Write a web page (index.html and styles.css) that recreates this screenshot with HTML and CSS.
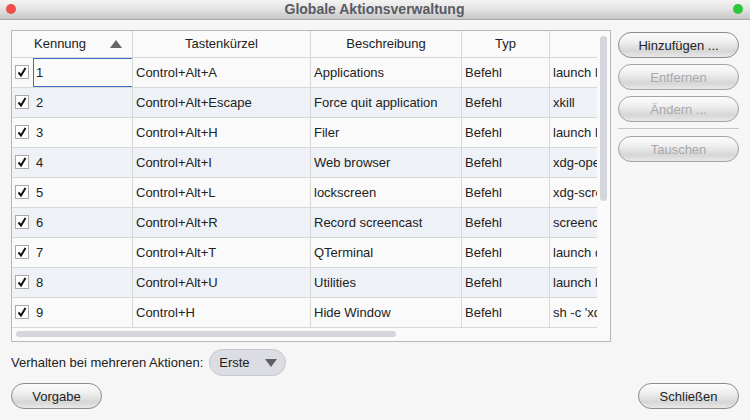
FILE: index.html
```html
<!DOCTYPE html>
<html lang="de">
<head>
<meta charset="utf-8">
<title>Globale Aktionsverwaltung</title>
<link rel="stylesheet" href="styles.css">
</head>
<body>
<div class="window">
  <div class="titlebar">
    <span class="dot red"></span>
    <span class="title">Globale Aktionsverwaltung</span>
    <span class="dot green"></span>
  </div>
  <div class="main">
    <div class="frame">
      <div class="upper">
        <div class="viewport">
          <div class="row head">
            <div class="cell c1 h1"><span>Kennung</span><span class="sort"></span></div>
            <div class="cell c2 hc">Tastenkürzel</div>
            <div class="cell c3 hc">Beschreibung</div>
            <div class="cell c4 hc">Typ</div>
            <div class="cell c5"></div>
          </div>
          <div class="row odd">
            <div class="cell c1"><span class="cb"><svg viewBox="0 0 12 12"><path d="M2.5 6.5 L5 9.5 L9.5 2" /></svg></span><span class="id focus">1</span></div>
            <div class="cell c2">Control+Alt+A</div>
            <div class="cell c3">Applications</div>
            <div class="cell c4">Befehl</div>
            <div class="cell c5">launch lxqt-panel</div>
          </div>
          <div class="row even">
            <div class="cell c1"><span class="cb"><svg viewBox="0 0 12 12"><path d="M2.5 6.5 L5 9.5 L9.5 2" /></svg></span><span class="id">2</span></div>
            <div class="cell c2">Control+Alt+Escape</div>
            <div class="cell c3">Force quit application</div>
            <div class="cell c4">Befehl</div>
            <div class="cell c5">xkill</div>
          </div>
          <div class="row odd">
            <div class="cell c1"><span class="cb"><svg viewBox="0 0 12 12"><path d="M2.5 6.5 L5 9.5 L9.5 2" /></svg></span><span class="id">3</span></div>
            <div class="cell c2">Control+Alt+H</div>
            <div class="cell c3">Filer</div>
            <div class="cell c4">Befehl</div>
            <div class="cell c5">launch lxqt-filer</div>
          </div>
          <div class="row even">
            <div class="cell c1"><span class="cb"><svg viewBox="0 0 12 12"><path d="M2.5 6.5 L5 9.5 L9.5 2" /></svg></span><span class="id">4</span></div>
            <div class="cell c2">Control+Alt+I</div>
            <div class="cell c3">Web browser</div>
            <div class="cell c4">Befehl</div>
            <div class="cell c5">xdg-open about:blank</div>
          </div>
          <div class="row odd">
            <div class="cell c1"><span class="cb"><svg viewBox="0 0 12 12"><path d="M2.5 6.5 L5 9.5 L9.5 2" /></svg></span><span class="id">5</span></div>
            <div class="cell c2">Control+Alt+L</div>
            <div class="cell c3">lockscreen</div>
            <div class="cell c4">Befehl</div>
            <div class="cell c5">xdg-screensaver lock</div>
          </div>
          <div class="row even">
            <div class="cell c1"><span class="cb"><svg viewBox="0 0 12 12"><path d="M2.5 6.5 L5 9.5 L9.5 2" /></svg></span><span class="id">6</span></div>
            <div class="cell c2">Control+Alt+R</div>
            <div class="cell c3">Record screencast</div>
            <div class="cell c4">Befehl</div>
            <div class="cell c5">screencast</div>
          </div>
          <div class="row odd">
            <div class="cell c1"><span class="cb"><svg viewBox="0 0 12 12"><path d="M2.5 6.5 L5 9.5 L9.5 2" /></svg></span><span class="id">7</span></div>
            <div class="cell c2">Control+Alt+T</div>
            <div class="cell c3">QTerminal</div>
            <div class="cell c4">Befehl</div>
            <div class="cell c5">launch qterminal</div>
          </div>
          <div class="row even">
            <div class="cell c1"><span class="cb"><svg viewBox="0 0 12 12"><path d="M2.5 6.5 L5 9.5 L9.5 2" /></svg></span><span class="id">8</span></div>
            <div class="cell c2">Control+Alt+U</div>
            <div class="cell c3">Utilities</div>
            <div class="cell c4">Befehl</div>
            <div class="cell c5">launch lxqt-utils</div>
          </div>
          <div class="row odd">
            <div class="cell c1"><span class="cb"><svg viewBox="0 0 12 12"><path d="M2.5 6.5 L5 9.5 L9.5 2" /></svg></span><span class="id">9</span></div>
            <div class="cell c2">Control+H</div>
            <div class="cell c3">Hide Window</div>
            <div class="cell c4">Befehl</div>
            <div class="cell c5">sh -c 'xdotool'</div>
          </div>
        </div>
        <div class="vscroll"><div class="vthumb"></div></div>
      </div>
      <div class="hscroll"><div class="hthumb"></div></div>
    </div>
    <div class="side">
      <button class="btn">Hinzufügen ...</button>
      <button class="btn dis">Entfernen</button>
      <button class="btn dis">Ändern ...</button>
      <div class="sep"></div>
      <button class="btn dis">Tauschen</button>
    </div>
  </div>
  <div class="options">
    <span class="label">Verhalten bei mehreren Aktionen:</span>
    <div class="combo"><span>Erste</span><span class="arrow"></span></div>
  </div>
  <div class="footer">
    <button class="btn wide">Vorgabe</button>
    <button class="btn wide2">Schließen</button>
  </div>
</div>
</body>
</html>
```

FILE: styles.css
```css
* { box-sizing: border-box; }
html, body { margin: 0; padding: 0; }
body {
  font-family: "Liberation Sans", Arial, sans-serif;
  font-size: 13px;
  color: #222;
  background: #f6f6f6;
}
.window {
  width: 750px;
  height: 420px;
  background: #f6f6f6;
  overflow: hidden;
}
.titlebar {
  height: 20px;
  display: flex;
  align-items: center;
  justify-content: space-between;
  padding: 0 7px 0 6px;
  background: linear-gradient(#f4f4f4, #e2e2e2 50%, #c6c6c6);
  border-bottom: 1px solid #a8a8a8;
}
.title {
  font-weight: bold;
  font-size: 14px;
  color: #575b63;
  margin-top: -1px;
}
.dot {
  width: 10px;
  height: 10px;
  border-radius: 50%;
  margin-top: -2px;
}
.red { background: #ee4f4a; }
.green { background: #2ec73a; }

.main {
  display: flex;
  gap: 7px;
  padding: 10px 11px 0 11px;
}
.frame {
  width: 600px;
  height: 312px;
  border: 1px solid #b7b7b7;
  background: #fafafa;
  display: flex;
  flex-direction: column;
}
.upper {
  display: flex;
  height: 297px;
}
.viewport {
  width: 585px;
  overflow: hidden;
}
.row {
  display: flex;
  height: 30px;
  border-bottom: 1px solid #d8d8d8;
  white-space: nowrap;
}
.row.head {
  height: 27px;
  background: #fafafa;
}
.row.odd { background: #fafafa; }
.row.even { background: #eef1f6; }
.cell {
  display: flex;
  align-items: center;
  padding-left: 3px;
  padding-bottom: 1px;
  border-right: 1px solid #d8d8d8;
  overflow: hidden;
  flex: none;
}
.c1 { width: 121px; padding-left: 3px; padding-bottom: 0; }
.c2 { width: 178px; }
.c3 { width: 151px; }
.c4 { width: 88px; }
.c5 { width: 80px; border-right: none; }
.hc { justify-content: center; padding-left: 0; }
.h1 { justify-content: space-between; padding-left: 22px; padding-right: 10px; padding-bottom: 1px; }
.sort {
  width: 0;
  height: 0;
  border-left: 6px solid transparent;
  border-right: 6px solid transparent;
  border-bottom: 8px solid #666;
}
.cb {
  width: 14px;
  height: 14px;
  border: 1px solid #a9a9a9;
  background: #fff;
  display: flex;
  align-items: center;
  justify-content: center;
  margin-top: -2px;
}
.cb svg {
  width: 12px;
  height: 12px;
  fill: none;
  stroke: #111;
  stroke-width: 2;
}
.id {
  margin-left: 4px;
  padding-left: 3px;
  padding-bottom: 1px;
  flex: 1;
  align-self: stretch;
  display: flex;
  align-items: center;
}
.id.focus {
  border: 1px solid #3a6fc4;
  padding-left: 2px;
  margin-right: -1px;
}
.vscroll {
  width: 13px;
  padding: 5px 0 0 3px;
}
.vthumb {
  width: 7px;
  height: 165px;
  border-radius: 4px;
  background: #d4d5dd;
}
.hscroll {
  padding: 3px 0 0 4px;
}
.hthumb {
  width: 380px;
  height: 6px;
  border-radius: 3px;
  background: #d4d5dd;
}

.side {
  width: 121px;
  display: flex;
  flex-direction: column;
  gap: 6px;
  padding-top: 2px;
}
.btn {
  font-family: "Liberation Sans", Arial, sans-serif;
  font-size: 13px;
  color: #222;
  height: 26px;
  border: 1px solid #8c8c8c;
  border-radius: 13px;
  background: linear-gradient(#fcfcfc, #f0f0f0 35%, #d6d6d6 75%, #e8e8e8);
  padding: 0;
  margin: 0;
}
.btn.dis { color: #a8a8a8; border-color: #a4a4a4; }
.sep {
  height: 1px;
  background: #c4c4c4;
  margin-bottom: 1px;
}

.options {
  display: flex;
  align-items: center;
  gap: 6px;
  padding: 7px 11px 0 11px;
}
.label { color: #222; }
.combo {
  width: 77px;
  height: 27px;
  border-radius: 14px;
  border: 1px solid #c6c7cc;
  background: #dcdde3;
  display: flex;
  align-items: center;
  justify-content: space-between;
  padding: 0 8px 0 9px;
}
.arrow {
  width: 0;
  height: 0;
  border-left: 6px solid transparent;
  border-right: 6px solid transparent;
  border-top: 8px solid #5e5e62;
}
.footer {
  display: flex;
  justify-content: space-between;
  padding: 7px 11px 0 11px;
}
.wide { width: 91px; }
.wide2 { width: 101px; }
```
